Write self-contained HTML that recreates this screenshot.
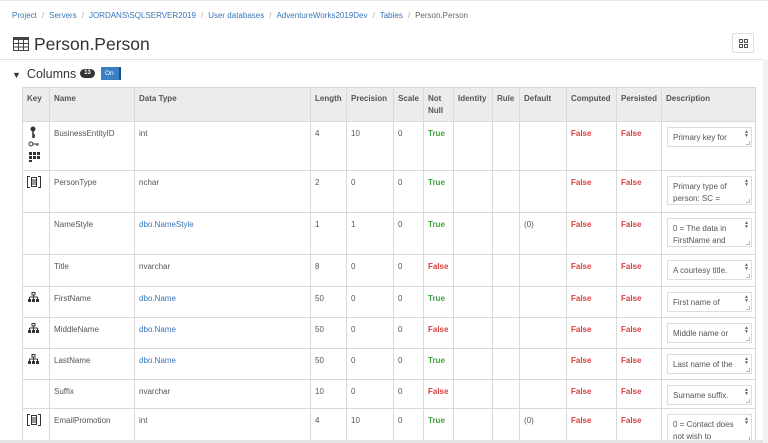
<!DOCTYPE html>
<html><head><style>
*{box-sizing:border-box;margin:0;padding:0}
html,body{width:768px;height:443px;overflow:hidden}
body{background:#fff;font-family:"Liberation Sans",Arial,sans-serif;position:relative}
.bc{position:absolute;left:12px;top:11px;font-size:8px;color:#3a76b8;white-space:nowrap}
.bc span.s{color:#aaa;margin:0 5px}
.bc .cur{color:#666}
h1{position:absolute;left:34px;top:34px;font-size:17.5px;font-weight:normal;color:#333}
.hr{position:absolute;left:0;top:59px;width:763px;height:1px;background:#e2e2e2}
.btn{position:absolute;left:732px;top:33px;width:22px;height:20px;border:1px solid #ddd;border-radius:2px;background:#fff}
.cols{position:absolute;left:12px;top:67px;font-size:12px;color:#333}
.badge{position:absolute;left:80px;top:69px;width:15px;height:9px;border-radius:5px;background:#333;color:#fff;font-size:6px;text-align:center;line-height:9px;font-weight:bold}
.on{position:absolute;left:101px;top:67px;width:20px;height:13px;background:#3a7fc4;color:#fff;font-size:6.5px;line-height:13px;padding-left:4px;border-right:2px solid #1a4f8a}
.wrap{position:absolute;left:22px;top:87px;width:734px;height:354px;overflow:hidden}
table{border-collapse:collapse;table-layout:fixed;width:733px;font-size:8px;color:#555}
td,th{border:1px solid #d9d9d9;vertical-align:top;text-align:left;padding:6px 4px 0 4px;line-height:12px;overflow:hidden}
th{background:#ececec;font-weight:bold;color:#555;height:34px;padding-top:5px}
.t{color:#3fa33f;font-weight:bold}.f{color:#d9403f;font-weight:bold}
.l{color:#3a76b8}
.ta{border:1px solid #ddd;height:20px;margin-top:-1px;margin-left:1px;width:85px;padding:4px 12px 0 5px;color:#555;line-height:12px;overflow:hidden;font-size:8px;position:relative}
.ta i{position:absolute;right:2px;top:2px;font-style:normal;font-size:5px;line-height:4px;color:#666}
.ta b{position:absolute;right:1px;bottom:1px;width:4px;height:4px;border-right:1px solid #bbb;border-bottom:1px solid #bbb;transform:skew(0)}
.sb{position:absolute;left:763px;top:60px;width:5px;height:383px;background:#f2f2f2}
.bot{position:absolute;left:0;top:440px;width:763px;height:3px;background:#e4e4e4}
.top{position:absolute;left:0;top:0;width:768px;height:1px;background:#e6e6e6}
</style></head><body>
<div class="top"></div>
<div class="bc">Project<span class="s">/</span>Servers<span class="s">/</span>JORDANS\SQLSERVER2019<span class="s">/</span>User databases<span class="s">/</span>AdventureWorks2019Dev<span class="s">/</span>Tables<span class="s">/</span><span class="cur">Person.Person</span></div>
<svg style="position:absolute;left:13px;top:37px" width="16" height="14" viewBox="0 0 16 14"><rect x="0.5" y="0.5" width="15" height="13" fill="none" stroke="#444"/><rect x="0" y="0" width="16" height="3" fill="#444"/><path d="M0 6.5H16M0 10H16M5.5 3V14M10.5 3V14" stroke="#444"/></svg>
<h1>Person.Person</h1>
<div class="btn"><svg style="position:absolute;left:6px;top:5px" width="9" height="9" viewBox="0 0 9 9"><rect x="0.5" y="0.5" width="3" height="3" fill="none" stroke="#555"/><rect x="5.5" y="0.5" width="3" height="3" fill="none" stroke="#555"/><rect x="0.5" y="5.5" width="3" height="3" fill="none" stroke="#555"/><rect x="5.5" y="5.5" width="3" height="3" fill="none" stroke="#555"/></svg></div>
<div class="hr"></div>
<div class="cols"><span style="font-size:9px;margin-right:6px">▼</span><span style="font-size:12.5px">Columns</span></div>
<div class="badge">13</div>
<div class="on">On</div>
<div class="wrap">
<table>
<colgroup><col style="width:27px"><col style="width:85px"><col style="width:176px"><col style="width:36px"><col style="width:47px"><col style="width:30px"><col style="width:30px"><col style="width:39px"><col style="width:27px"><col style="width:47px"><col style="width:50px"><col style="width:45px"><col style="width:94px"></colgroup>
<tr><th>Key</th><th>Name</th><th>Data Type</th><th>Length</th><th>Precision</th><th>Scale</th><th>Not Null</th><th>Identity</th><th>Rule</th><th>Default</th><th>Computed</th><th>Persisted</th><th>Description</th></tr>
<tr style="height:49px"><td style="padding:4px 0 0 5px"><svg width="12" height="36" viewBox="0 0 12 36"><circle cx="5" cy="3" r="2.5" fill="#333"/><path d="M5 5V12M5 9H7M5 11H7" stroke="#333" stroke-width="1.5"/><circle cx="3" cy="18" r="2" fill="none" stroke="#333"/><path d="M5 18H11M9 18V20" stroke="#333"/><path d="M1 26h3v3H1zM5 26h3v3H5zM9 26h3v3H9zM1 30h3v3H1zM5 30h3v3H5zM9 30h3v3H9zM1 34h3v2H1z" fill="#333"/></svg></td><td>BusinessEntityID</td><td>int</td><td>4</td><td>10</td><td>0</td><td class="t">True</td><td></td><td></td><td></td><td class="f">False</td><td class="f">False</td><td><div class="ta">Primary key for<i>▲<br>▼</i><b></b></div></td></tr>
<tr style="height:42px"><td style="padding:5px 0 0 4px"><svg width="14" height="12" viewBox="0 0 14 12"><path d="M3 .5H.5v11H3M11 .5h2.5v11H11" fill="none" stroke="#333"/><rect x="4.5" y="1.5" width="5" height="9" fill="none" stroke="#333"/><path d="M5 4h4M5 6h4M5 8h4" stroke="#333"/></svg></td><td>PersonType</td><td>nchar</td><td>2</td><td>0</td><td>0</td><td class="t">True</td><td></td><td></td><td></td><td class="f">False</td><td class="f">False</td><td><div class="ta" style="height:29px">Primary type of person: SC =<i>▲<br>▼</i><b></b></div></td></tr>
<tr style="height:42px"><td></td><td>NameStyle</td><td class="l">dbo.NameStyle</td><td>1</td><td>1</td><td>0</td><td class="t">True</td><td></td><td></td><td>(0)</td><td class="f">False</td><td class="f">False</td><td><div class="ta" style="height:29px">0 = The data in FirstName and<i>▲<br>▼</i><b></b></div></td></tr>
<tr style="height:32px"><td></td><td>Title</td><td>nvarchar</td><td>8</td><td>0</td><td>0</td><td class="f">False</td><td></td><td></td><td></td><td class="f">False</td><td class="f">False</td><td><div class="ta">A courtesy title.<i>▲<br>▼</i><b></b></div></td></tr>
<tr style="height:31px"><td style="padding:5px 0 0 5px"><svg width="11" height="10" viewBox="0 0 11 10"><rect x="4" y="0.5" width="3" height="2.5" fill="none" stroke="#333"/><path d="M5.5 3v2M1.5 5h8M1.5 5v2M5.5 5v2M9.5 5v2" stroke="#333"/><rect x="0" y="7" width="3" height="3" fill="#333"/><rect x="4" y="7" width="3" height="3" fill="#333"/><rect x="8" y="7" width="3" height="3" fill="#333"/></svg></td><td>FirstName</td><td class="l">dbo.Name</td><td>50</td><td>0</td><td>0</td><td class="t">True</td><td></td><td></td><td></td><td class="f">False</td><td class="f">False</td><td><div class="ta">First name of<i>▲<br>▼</i><b></b></div></td></tr>
<tr style="height:31px"><td style="padding:5px 0 0 5px"><svg width="11" height="10" viewBox="0 0 11 10"><rect x="4" y="0.5" width="3" height="2.5" fill="none" stroke="#333"/><path d="M5.5 3v2M1.5 5h8M1.5 5v2M5.5 5v2M9.5 5v2" stroke="#333"/><rect x="0" y="7" width="3" height="3" fill="#333"/><rect x="4" y="7" width="3" height="3" fill="#333"/><rect x="8" y="7" width="3" height="3" fill="#333"/></svg></td><td>MiddleName</td><td class="l">dbo.Name</td><td>50</td><td>0</td><td>0</td><td class="f">False</td><td></td><td></td><td></td><td class="f">False</td><td class="f">False</td><td><div class="ta">Middle name or<i>▲<br>▼</i><b></b></div></td></tr>
<tr style="height:31px"><td style="padding:5px 0 0 5px"><svg width="11" height="10" viewBox="0 0 11 10"><rect x="4" y="0.5" width="3" height="2.5" fill="none" stroke="#333"/><path d="M5.5 3v2M1.5 5h8M1.5 5v2M5.5 5v2M9.5 5v2" stroke="#333"/><rect x="0" y="7" width="3" height="3" fill="#333"/><rect x="4" y="7" width="3" height="3" fill="#333"/><rect x="8" y="7" width="3" height="3" fill="#333"/></svg></td><td>LastName</td><td class="l">dbo.Name</td><td>50</td><td>0</td><td>0</td><td class="t">True</td><td></td><td></td><td></td><td class="f">False</td><td class="f">False</td><td><div class="ta">Last name of the<i>▲<br>▼</i><b></b></div></td></tr>
<tr style="height:29px"><td></td><td>Suffix</td><td>nvarchar</td><td>10</td><td>0</td><td>0</td><td class="f">False</td><td></td><td></td><td></td><td class="f">False</td><td class="f">False</td><td><div class="ta">Surname suffix.<i>▲<br>▼</i><b></b></div></td></tr>
<tr style="height:40px"><td style="padding:5px 0 0 4px"><svg width="14" height="12" viewBox="0 0 14 12"><path d="M3 .5H.5v11H3M11 .5h2.5v11H11" fill="none" stroke="#333"/><rect x="4.5" y="1.5" width="5" height="9" fill="none" stroke="#333"/><path d="M5 4h4M5 6h4M5 8h4" stroke="#333"/></svg></td><td>EmailPromotion</td><td>int</td><td>4</td><td>10</td><td>0</td><td class="t">True</td><td></td><td></td><td>(0)</td><td class="f">False</td><td class="f">False</td><td><div class="ta" style="height:29px">0 = Contact does not wish to<i>▲<br>▼</i><b></b></div></td></tr>
</table>
</div>
<div class="sb"></div>
<div class="bot"></div>
</body></html>
